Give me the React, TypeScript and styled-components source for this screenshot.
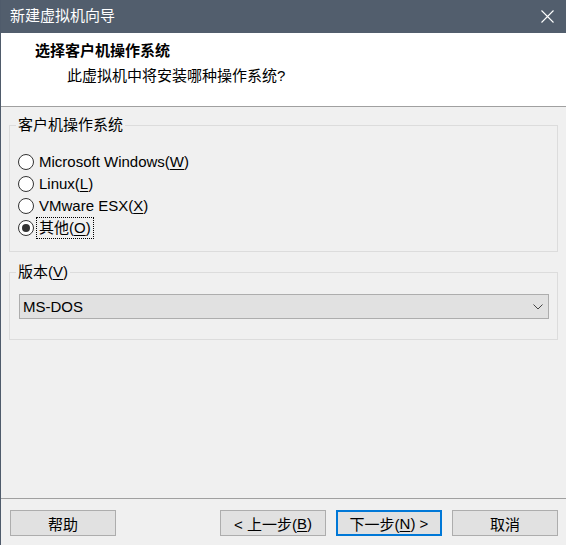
import React, { useState } from 'react';
import styled, { createGlobalStyle } from 'styled-components';

const GlobalStyle = createGlobalStyle`
  html, body {
    margin: 0;
    padding: 0;
    background: #f0f0f0;
  }
  * {
    box-sizing: border-box;
  }
`;

const FONT = `'Liberation Sans', 'Noto Sans CJK SC', sans-serif`;

const Window = styled.div`
  width: 566px;
  height: 545px;
  display: flex;
  flex-direction: column;
  border-left: 1px solid #4f5b6b;
  background: #f0f0f0;
  font-family: ${FONT};
  font-size: 15px;
  color: #000;
  overflow: hidden;
`;

const TitleBar = styled.div`
  height: 33px;
  flex: none;
  display: flex;
  align-items: center;
  justify-content: space-between;
  padding: 0 12px 1px 9px;
  background: #525e6d;
  color: #fff;
`;

const TitleText = styled.span`
  font-size: 15px;
  line-height: 18px;
`;

const CloseButton = styled.button`
  width: 14px;
  height: 14px;
  padding: 0;
  border: none;
  background: none;
  display: flex;
  align-items: center;
  justify-content: center;
`;

const Header = styled.div`
  height: 74px;
  flex: none;
  background: #fff;
  border-bottom: 1px solid #a0a0a0;
  padding: 9px 0 0 34px;
`;

const HeaderTitle = styled.div`
  font-weight: bold;
  font-size: 15px;
  line-height: 18px;
`;

const HeaderSub = styled.div`
  margin: 7px 0 0 32px;
  font-size: 15px;
  line-height: 18px;
`;

const Body = styled.div`
  flex: 1;
  padding: 9px 8px 0 8px;
  display: flex;
  flex-direction: column;
  gap: 11px;
`;

const GroupBox = styled.fieldset<{ $pad: string }>`
  margin: 0;
  padding: ${p => p.$pad};
  border: 1px solid #dcdcdc;
  min-width: 0;
`;

const Legend = styled.legend<{ $shift: number }>`
  padding: 0 2px;
  margin-left: ${p => p.$shift}px;
  line-height: 18px;
  font-size: 15px;
`;

const RadioRow = styled.label`
  height: 22px;
  display: flex;
  align-items: center;
  gap: 5px;
  cursor: default;
`;

const RadioCircle = styled.span<{ $checked: boolean }>`
  width: 16px;
  height: 16px;
  flex: none;
  border-radius: 50%;
  border: 1px solid #333;
  background: #fff;
  display: flex;
  align-items: center;
  justify-content: center;

  &::after {
    content: '';
    width: 8px;
    height: 8px;
    border-radius: 50%;
    background: #333;
    display: ${p => (p.$checked ? 'block' : 'none')};
  }
`;

const RadioText = styled.span<{ $focused: boolean }>`
  line-height: 18px;
  padding: 0 1px;
  margin-left: -1px;
  outline: ${p => (p.$focused ? '1px dotted #000' : 'none')};
  outline-offset: 1px;
`;

const Mnemonic = styled.u`
  text-decoration: underline;
  text-underline-offset: 2px;
`;

const SelectBox = styled.div`
  height: 25px;
  display: flex;
  align-items: center;
  justify-content: space-between;
  padding: 0 5px 0 3px;
  background: #e1e1e1;
  border: 1px solid #adadad;
`;

const Footer = styled.div`
  flex: none;
  height: 47px;
  border-top: 1px solid #a0a0a0;
  display: flex;
  align-items: flex-start;
  padding: 11px 8px 0 9px;
  gap: 10px;
`;

const Spacer = styled.div`
  flex: 1;
`;

const Button = styled.button<{ $default?: boolean }>`
  width: 106px;
  height: 26px;
  padding: 0;
  font-family: ${FONT};
  font-size: 15px;
  color: #000;
  background: #e1e1e1;
  border: ${p => (p.$default ? '2px solid #0078d7' : '1px solid #adadad')};
  display: flex;
  align-items: center;
  justify-content: center;
  cursor: default;
`;

const options = [
  { label: 'Microsoft Windows', key: 'W' },
  { label: 'Linux', key: 'L' },
  { label: 'VMware ESX', key: 'X' },
  { label: '其他', key: 'O' },
];

const App: React.FC = () => {
  const [selected, setSelected] = useState<string>('O');

  return (
    <Window>
      <GlobalStyle />
      <TitleBar>
        <TitleText>新建虚拟机向导</TitleText>
        <CloseButton aria-label="关闭">
          <svg width="13" height="13" viewBox="0 0 13 13">
            <path d="M0.5 0.5 L12.5 12.5 M12.5 0.5 L0.5 12.5" stroke="#fff" strokeWidth="1.1" />
          </svg>
        </CloseButton>
      </TitleBar>
      <Header>
        <HeaderTitle>选择客户机操作系统</HeaderTitle>
        <HeaderSub>此虚拟机中将安装哪种操作系统?</HeaderSub>
      </Header>
      <Body>
        <GroupBox $pad="17px 8px 12px 8px">
          <Legend $shift={-2}>客户机操作系统</Legend>
          {options.map(o => (
            <RadioRow key={o.key} onClick={() => setSelected(o.key)}>
              <RadioCircle $checked={selected === o.key} />
              <RadioText $focused={selected === o.key}>
                {o.label}(<Mnemonic>{o.key}</Mnemonic>)
              </RadioText>
            </RadioRow>
          ))}
        </GroupBox>
        <GroupBox $pad="13px 8px 20px 9px">
          <Legend $shift={-3}>
            版本(<Mnemonic>V</Mnemonic>)
          </Legend>
          <SelectBox>
            <span>MS-DOS</span>
            <svg width="10" height="6" viewBox="0 0 10 6">
              <path d="M0.5 0.5 L5 5 L9.5 0.5" stroke="#444" strokeWidth="1" fill="none" />
            </svg>
          </SelectBox>
        </GroupBox>
      </Body>
      <Footer>
        <Button>帮助</Button>
        <Spacer />
        <Button>
          &lt; 上一步(<Mnemonic>B</Mnemonic>)
        </Button>
        <Button $default>
          下一步(<Mnemonic>N</Mnemonic>) &gt;
        </Button>
        <Button>取消</Button>
      </Footer>
    </Window>
  );
};

export default App;
